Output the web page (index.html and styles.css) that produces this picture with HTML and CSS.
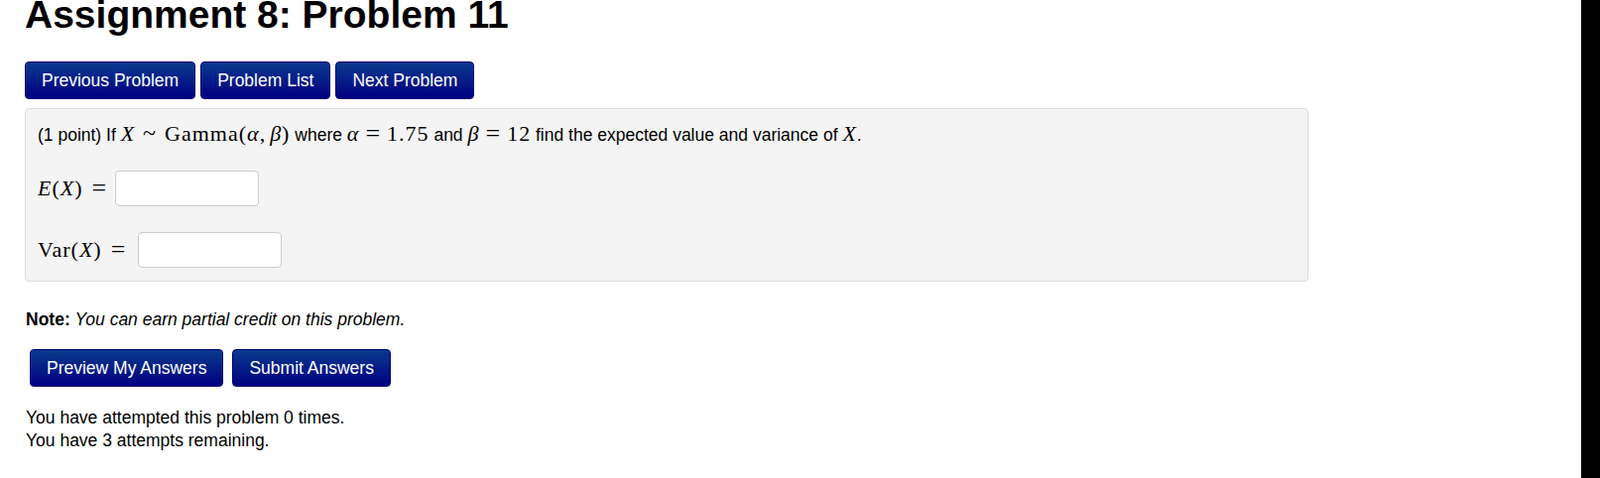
FILE: index.html
```html
<!DOCTYPE html>
<html lang="en">
<head>
    <meta charset="UTF-8">
    <meta name="viewport" content="width=device-width, initial-scale=1.0">
    <title>Assignment 8: Problem 11</title>
    <link rel="stylesheet" href="styles.css">
</head>
<body>
    <div class="pagina">
        <main class="conteudo">
            <h1 class="titulo">Assignment 8: Problem 11</h1>

            <div class="navegacao">
                <button class="botao">Previous Problem</button>
                <button class="botao">Problem List</button>
                <button class="botao">Next Problem</button>
            </div>

            <div class="problema">
                <p class="enunciado">(1 point) If <span class="mat"><i>X</i><span class="rel til">~</span>Gamma(<i>α</i>,<span class="fino"></span><i>β</i>)</span> where <span class="mat"><i>α</i><span class="rel">=</span>1.75</span> and <span class="mat"><i>β</i><span class="rel">=</span>12</span> find the expected value and variance of <span class="mat"><i>X</i></span>.</p>

                <div class="resposta">
                    <span class="mat"><i>E</i>(<i>X</i>)<span class="rel">=</span></span>
                    <input class="campo" type="text">
                </div>

                <div class="resposta resposta-var">
                    <span class="mat">Var(<i>X</i>)<span class="rel">=</span></span>
                    <input class="campo" type="text">
                </div>
            </div>

            <p class="nota"><b>Note:</b> <i>You can earn partial credit on this problem.</i></p>

            <div class="acoes">
                <button class="botao">Preview My Answers</button>
                <button class="botao">Submit Answers</button>
            </div>

            <p class="tentativas">You have attempted this problem 0 times.<br>You have 3 attempts remaining.</p>
        </main>
        <div class="barra"></div>
    </div>
</body>
</html>
```
FILE: styles.css
```css
*{
    margin: 0;
    padding: 0;
    box-sizing: border-box;
}
body{
    font-family: "Liberation Sans", Arial, sans-serif;
    font-size: 17.5px;
    line-height: 20px;
    color: #000;
    background: #fff;
    overflow: hidden;
}
.pagina{
    display: flex;
    height: 482px;
}
.conteudo{
    flex: 1;
    padding-left: 25px;
}
.barra{
    width: 19px;
    background: #000; /* faixa preta na direita */
}
.titulo{
    font-size: 39px;
    line-height: 40px;
    font-weight: bold;
    margin-top: -5px;
}

/* botoes azuis */
.navegacao{
    display: flex;
    gap: 5px;
    margin-top: 27px;
}
.botao{
    height: 38px;
    padding: 0 16px;
    font-family: "Liberation Sans", Arial, sans-serif;
    font-size: 17.5px;
    color: #fff;
    background-image: linear-gradient(to bottom, #0b3a8e, #000080);
    border: 1px solid #00006e;
    border-radius: 4px;
    cursor: pointer;
}

/* caixa do problema */
.problema{
    width: 1294px;
    margin-top: 9px;
    padding: 12px 12px 13px 12px;
    background-color: #f4f4f4;
    border: 1px solid #dddddd;
    border-radius: 4px;
}
.enunciado{
    line-height: 24px;
}
.mat{
    font-family: "Liberation Serif", "DejaVu Serif", serif;
    font-size: 22px;
    line-height: 1;
    letter-spacing: 1px;
}
.mat i{
    font-style: italic;
}
.rel{
    margin: 0 6px;
    font-size: 26px;
    vertical-align: -1px;
}
.til{
    margin: 0 8px;
    font-size: 24px;
    vertical-align: 0;
}
.fino{
    display: inline-block;
    width: 4px;
}
.resposta{
    display: flex;
    align-items: center;
    gap: 8px;
    margin-top: 24px;
}
.resposta .rel{
    margin: 0 0 0 9px;
}
.resposta-var{
    gap: 12px;
    margin-top: 26px;
}
.campo{
    width: 145px;
    height: 36px;
    background: #fff;
    border: 1px solid #cccccc;
    border-radius: 4px;
}
.nota{
    margin-top: 28px;
    padding-left: 1px;
}
.acoes{
    display: flex;
    gap: 9px;
    margin-top: 20px;
    padding-left: 5px;
}
.tentativas{
    margin-top: 20px;
    padding-left: 1px;
    line-height: 23px;
}
```
